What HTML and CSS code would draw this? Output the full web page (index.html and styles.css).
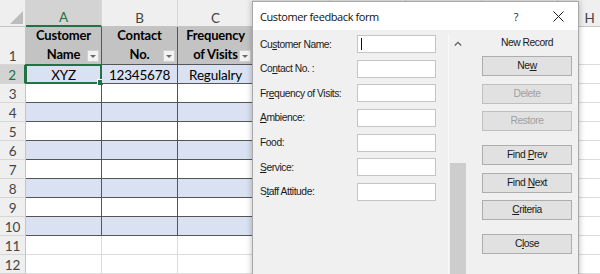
FILE: index.html
```html
<!DOCTYPE html>
<html>
<head>
<meta charset="utf-8">
<link rel="stylesheet" href="styles.css">
</head>
<body>
<div class="app">
  <div class="sheet">
    <div class="hc corner"><svg width="13" height="13" viewBox="0 0 13 13"><polygon points="13,0 13,13 0,13" fill="#bcbcbc"/></svg></div>
    <div class="hc sel">A</div><div class="hc">B</div><div class="hc">C</div><div class="hc"></div><div class="hc"></div><div class="hc"></div><div class="hc"></div><div class="hc">H</div>

    <div class="rh">1</div>
    <div class="c t hd">Customer<br>Name<span class="flt"><i></i></span></div>
    <div class="c t hd">Contact<br>No.<span class="flt"><i></i></span></div>
    <div class="c t hd">Frequency<br>of Visits<span class="flt"><i></i></span></div>
    <div class="c"></div><div class="c"></div><div class="c"></div><div class="c"></div><div class="c"></div>

    <div class="rh sel">2</div>
    <div class="c t b">XYZ<span class="selbox"></span></div><div class="c t b">12345678</div><div class="c t b">Regulalry</div>
    <div class="c"></div><div class="c"></div><div class="c"></div><div class="c"></div><div class="c"></div>

    <div class="rh">3</div>
    <div class="c t"></div><div class="c t"></div><div class="c t"></div>
    <div class="c"></div><div class="c"></div><div class="c"></div><div class="c"></div><div class="c"></div>

    <div class="rh">4</div>
    <div class="c t b"></div><div class="c t b"></div><div class="c t b"></div>
    <div class="c"></div><div class="c"></div><div class="c"></div><div class="c"></div><div class="c"></div>

    <div class="rh">5</div>
    <div class="c t"></div><div class="c t"></div><div class="c t"></div>
    <div class="c"></div><div class="c"></div><div class="c"></div><div class="c"></div><div class="c"></div>

    <div class="rh">6</div>
    <div class="c t b"></div><div class="c t b"></div><div class="c t b"></div>
    <div class="c"></div><div class="c"></div><div class="c"></div><div class="c"></div><div class="c"></div>

    <div class="rh">7</div>
    <div class="c t"></div><div class="c t"></div><div class="c t"></div>
    <div class="c"></div><div class="c"></div><div class="c"></div><div class="c"></div><div class="c"></div>

    <div class="rh">8</div>
    <div class="c t b"></div><div class="c t b"></div><div class="c t b"></div>
    <div class="c"></div><div class="c"></div><div class="c"></div><div class="c"></div><div class="c"></div>

    <div class="rh">9</div>
    <div class="c t"></div><div class="c t"></div><div class="c t"></div>
    <div class="c"></div><div class="c"></div><div class="c"></div><div class="c"></div><div class="c"></div>

    <div class="rh">10</div>
    <div class="c t b"></div><div class="c t b"></div><div class="c t b"></div>
    <div class="c"></div><div class="c"></div><div class="c"></div><div class="c"></div><div class="c"></div>

    <div class="rh">11</div>
    <div class="c"></div><div class="c"></div><div class="c"></div><div class="c"></div><div class="c"></div><div class="c"></div><div class="c"></div><div class="c"></div>

    <div class="rh">12</div>
    <div class="c"></div><div class="c"></div><div class="c"></div><div class="c"></div><div class="c"></div><div class="c"></div><div class="c"></div><div class="c"></div>
  </div>

  <div class="dlg">
    <div class="titlebar">
      <div class="title">Customer feedback form</div>
      <div class="help">?</div>
      <div class="close"><svg width="11" height="11" viewBox="0 0 11 11"><path d="M0.5 0.5 L10.5 10.5 M10.5 0.5 L0.5 10.5" stroke="#222" stroke-width="1"/></svg></div>
    </div>
    <div class="dbody">
      <div class="fields">
        <div class="frow"><span class="lbl">Cu<u>s</u>tomer Name:</span><span class="inp"><span class="caret"></span></span></div>
        <div class="frow"><span class="lbl">Co<u>n</u>tact No. :</span><span class="inp"></span></div>
        <div class="frow"><span class="lbl">Fr<u>e</u>quency of Visits:</span><span class="inp"></span></div>
        <div class="frow"><span class="lbl"><u>A</u>mbience:</span><span class="inp"></span></div>
        <div class="frow"><span class="lbl">Food:</span><span class="inp"></span></div>
        <div class="frow"><span class="lbl"><u>S</u>ervice:</span><span class="inp"></span></div>
        <div class="frow"><span class="lbl">S<u>t</u>aff Attitude:</span><span class="inp"></span></div>
      </div>
      <div class="vscroll">
        <svg class="up" width="8" height="5" viewBox="0 0 8 5"><path d="M0.8 4.5 L4 1.3 L7.2 4.5" fill="none" stroke="#606060" stroke-width="1.3"/></svg>
        <div class="track"></div>
        <div class="thumb"></div>
      </div>
      <div class="btns">
        <div class="rec">New Record</div>
        <div class="btn first">Ne<u>w</u></div>
        <div class="btn dis">Delete</div>
        <div class="btn dis">Restore</div>
        <div class="btn grp">Find <u>P</u>rev</div>
        <div class="btn">Find <u>N</u>ext</div>
        <div class="btn"><u>C</u>riteria</div>
        <div class="btn grp">C<u>l</u>ose</div>
      </div>
    </div>
  </div>
</div>
</body>
</html>
```

FILE: styles.css
```css
* { box-sizing: border-box; }
html, body { margin: 0; padding: 0; }
body { width: 600px; height: 274px; overflow: hidden; background: #fff; }
.app { position: relative; width: 600px; height: 274px; overflow: hidden; }

.sheet {
  display: grid;
  grid-template-columns: 26px repeat(7, 76px) 64px;
  grid-template-rows: 27px 38px repeat(11, 19px);
  width: 622px;
  font-family: Lato, "Liberation Sans", sans-serif;
  font-size: 13px;
  letter-spacing: -0.2px;
  color: #000;
}

.hc {
  background: #efefef;
  border-right: 1px solid #d6d6d6;
  border-bottom: 1px solid #c4c4c4;
  color: #444;
  display: flex;
  align-items: flex-end;
  justify-content: center;
  padding-bottom: 0;
  line-height: 16px;
  font-size: 13.5px;
}
.hc.sel {
  background: #d3d3d3;
  color: #217346;
  border-bottom: 2px solid #217346;
}
.hc.corner {
  justify-content: flex-end;
  padding: 0 2px 2px 0;
}
.hc.corner svg { display: block; }

.rh {
  background: #efefef;
  border-right: 1px solid #c4c4c4;
  border-bottom: 1px solid #d6d6d6;
  color: #444;
  display: flex;
  align-items: flex-end;
  justify-content: center;
  line-height: 16px;
  padding-bottom: 0;
  font-size: 13.5px;
}
.rh.sel {
  background: #d3d3d3;
  color: #217346;
  border-right: 2px solid #217346;
}

.c {
  position: relative;
  border-right: 1px solid #dcdcdc;
  border-bottom: 1px solid #dcdcdc;
  display: flex;
  align-items: flex-end;
  justify-content: center;
  text-align: center;
  line-height: 16px;
  padding-bottom: 0;
  white-space: nowrap;
  font-size: 13.5px;
}
.c.t {
  border-right: 1px solid #555;
  border-bottom: 1px solid #555;
}
.c.b { background: #d9e1f2; }
.c.hd {
  background: #c3c3c3;
  font-weight: bold;
  line-height: 19px;
  overflow: hidden;
  font-size: 13px;
}

.flt {
  position: absolute;
  right: 2px;
  bottom: 2px;
  width: 12px;
  height: 12px;
  background: #f3f3f3;
  border: 1px solid #cfcfcf;
  display: flex;
  align-items: center;
  justify-content: center;
}
.flt i {
  display: block;
  width: 0;
  height: 0;
  border-left: 3px solid transparent;
  border-right: 3px solid transparent;
  border-top: 3px solid #6a6a6a;
}

.selbox {
  position: absolute;
  left: -1px;
  top: -1px;
  right: -1px;
  bottom: -1px;
  border: 2px solid #217346;
}
.selbox::after {
  content: "";
  position: absolute;
  right: -4px;
  bottom: -4px;
  width: 5px;
  height: 5px;
  background: #217346;
  border: 1px solid #fff;
}

/* dialog */
.dlg {
  position: absolute;
  left: 252px;
  top: 1px;
  width: 327px;
  height: 290px;
  background: #f0f0f0;
  border: 1px solid #a8a8a8;
  box-shadow: 0 0 6px rgba(0, 0, 0, 0.28);
  font-family: "Liberation Sans", Arial, sans-serif;
  font-size: 10.3px;
  letter-spacing: -0.45px;
  color: #1a1a1a;
}
.titlebar {
  height: 28px;
  background: #fff;
  display: flex;
  align-items: center;
  padding-left: 7px;
}
.title {
  flex: 1;
  font-family: "Open Sans", "Liberation Sans", sans-serif;
  font-size: 11px;
  letter-spacing: -0.4px;
  color: #111;
  white-space: nowrap;
}
.help {
  width: 36px;
  margin-right: 4px;
  text-align: center;
  font-family: "Open Sans", "Liberation Sans", sans-serif;
  font-size: 11px;
  letter-spacing: 0;
  color: #222;
}
.close {
  width: 40px;
  display: flex;
  justify-content: center;
  align-items: center;
}
.close svg { display: block; }

.dbody {
  display: flex;
  height: 262px;
}
.fields {
  width: 183px;
  padding: 5px 0 0 7px;
  display: flex;
  flex-direction: column;
  gap: 6.67px;
}
.frow {
  display: flex;
  align-items: center;
  height: 18px;
}
.lbl {
  width: 97px;
  white-space: nowrap;
}
.inp {
  position: relative;
  width: 79px;
  height: 18px;
  background: #fff;
  border: 1px solid #c4c4c4;
}
.caret {
  position: absolute;
  left: 3px;
  top: 2px;
  width: 1px;
  height: 12px;
  background: #111;
}

.vscroll {
  margin-left: 12px;
  width: 19px;
  margin-top: 4px;
  border-left: 1px solid #f9f9f9;
  display: flex;
  flex-direction: column;
  align-items: center;
}
.vscroll .up {
  display: block;
  margin-top: 7px;
}
.track { flex: 0 0 117px; }
.thumb {
  width: 16px;
  flex: 1;
  background: #cdcdcd;
}

.btns {
  margin-left: 15px;
  width: 90px;
  padding-top: 5px;
  display: flex;
  flex-direction: column;
}
.rec {
  text-align: center;
  line-height: 16px;
  height: 16px;
}
.btn {
  height: 20px;
  line-height: 18px;
  text-align: center;
  background: #e1e1e1;
  border: 1px solid #adadad;
  margin-top: 7.5px;
}
.btn.first { margin-top: 5px; }
.btn.grp { margin-top: 14px; }
.btn.dis {
  color: #a0a0a0;
  border-color: #bfbfbf;
}
u { text-decoration: underline; text-underline-offset: 1px; }
```
